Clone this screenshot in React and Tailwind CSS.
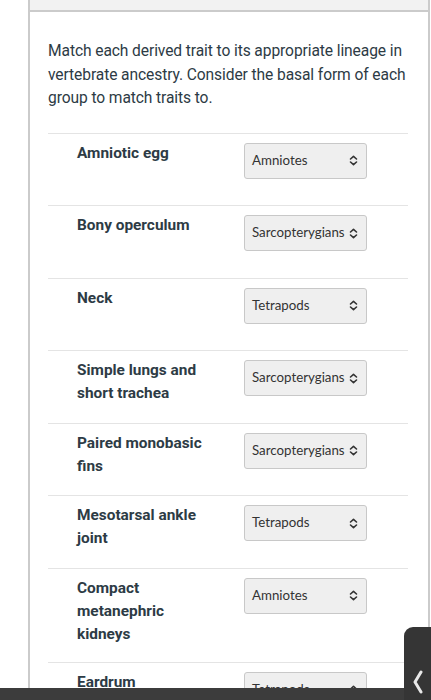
import React from "react";

const rows = [
  ["Amniotic egg", "Amniotes"],
  ["Bony operculum", "Sarcopterygians"],
  ["Neck", "Tetrapods"],
  ["Simple lungs and short trachea", "Sarcopterygians"],
  ["Paired monobasic fins", "Sarcopterygians"],
  ["Mesotarsal ankle joint", "Tetrapods"],
  ["Compact metanephric kidneys", "Amniotes"],
  ["Eardrum", "Tetrapods"],
];

function UpDown() {
  return (
    <svg width="9" height="11" viewBox="0 0 9 11" fill="none" stroke="#333" strokeWidth="1.6" strokeLinecap="round" strokeLinejoin="round">
      <path d="M1.5 4 L4.5 1.3 L7.5 4" />
      <path d="M1.5 7 L4.5 9.7 L7.5 7" />
    </svg>
  );
}

export default function App() {
  return (
    <div className="min-h-[700px] bg-white relative overflow-hidden" style={{ fontFamily: "Roboto, 'Liberation Sans', sans-serif" }}>
      <div className="ml-[28px] mr-[1px] border-l-2 border-r-2 border-[#cbcbcb] min-h-[760px]">
        <div className="h-[12px] bg-[#f2f2f2] border-b-2 border-[#cbcbcb]" />
        <div className="pl-[18px] pr-[16px] pt-[28px]">
          <p className="text-[15.6px] leading-[23.5px] text-[#2d3b45] tracking-[-0.1px]">
            Match each derived trait to its appropriate lineage in vertebrate ancestry. Consider the basal form of each group to match traits to.
          </p>
          <div className="mt-[22px] mr-[4px]">
            {rows.map(([label, val], i) => (
              <div key={i} className="flex border-t border-[#e4e4e4] pt-[8px] pb-[16.5px] pl-[29px]">
                <div className="w-[138px] text-[15.4px] leading-[23px] font-bold text-[#2d3b45]">{label}</div>
                <div className="ml-[29px]">
                  <div
                    className="mt-[1px] mb-[10px] w-[123px] h-[36px] rounded-[3px] border border-[#c8c8c8] bg-[#efefef] flex items-center justify-between pl-[7px] pr-[8px] text-[13.3px] text-[#333]"
                    style={{ fontFamily: "Lato, 'Liberation Sans', sans-serif" }}
                  >
                    <span>{val}</span>
                    <UpDown />
                  </div>
                </div>
              </div>
            ))}
          </div>
        </div>
      </div>
      <div className="fixed left-0 right-0 bottom-0 h-[12px] bg-[#3c3c3c]" />
      <div className="fixed right-0 top-[627px] w-[27px] h-[73px] bg-[#353535] rounded-tl-[9px] flex items-end justify-center pb-[6px]">
        <svg width="12" height="24" viewBox="0 0 12 24" fill="none" stroke="#e8e8e8" strokeWidth="3" strokeLinecap="round" strokeLinejoin="round">
          <path d="M9 2 L3 12 L9 22" />
        </svg>
      </div>
    </div>
  );
}
